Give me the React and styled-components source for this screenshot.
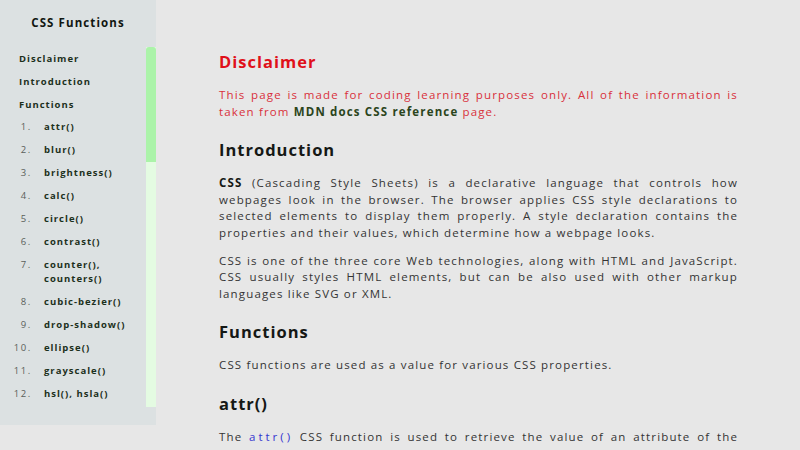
import styled, { createGlobalStyle } from "styled-components";

const GlobalStyle = createGlobalStyle`
  * { box-sizing: border-box; }
  html, body {
    margin: 0;
    height: 100%;
    overflow: hidden;
    background: #e7e7e7;
    font-family: 'Open Sans', 'Noto Sans', sans-serif;
  }
`

const functionsList = [
    "attr()",
    "blur()",
    "brightness()",
    "calc()",
    "circle()",
    "contrast()",
    "counter(), counters()",
    "cubic-bezier()",
    "drop-shadow()",
    "ellipse()",
    "grayscale()",
    "hsl(), hsla()",
    "hue-rotate()",
    "hwb()",
    "inset()",
    "invert()",
    "linear-gradient()",
    "matrix()",
    "max()",
    "min()",
    "opacity()",
    "perspective()",
    "polygon()",
    "radial-gradient()",
    "rgb(), rgba()",
    "rotate()",
    "saturate()",
    "scale()",
    "sepia()",
    "skew()",
    "translate()",
    "url()",
    "var()",
]

export default function App() {
    return (
        <>
            <GlobalStyle />
            <Page>
                <Sidebar>
                    <SideTitle>CSS Functions</SideTitle>
                    <NavBody>
                        <NavScroll>
                            <NavLink href="#disclaimer">Disclaimer</NavLink>
                            <NavLink href="#introduction">Introduction</NavLink>
                            <NavLink href="#functions">Functions</NavLink>
                            <NavList>
                                {functionsList.map((name, i) => (
                                    <NavItem key={i}><a href="#">{name}</a></NavItem>
                                ))}
                            </NavList>
                        </NavScroll>
                        <ScrollTrack>
                            <ScrollThumb />
                        </ScrollTrack>
                    </NavBody>
                </Sidebar>

                <Main>
                    <Section id="disclaimer">
                        <Heading warn>Disclaimer</Heading>
                        <Text warn>
                            This page is made for coding learning purposes only. All of the information is
                            taken from <Strong green>MDN docs CSS reference</Strong> page.
                        </Text>
                    </Section>

                    <Section id="introduction">
                        <Heading>Introduction</Heading>
                        <Text>
                            <Strong>CSS</Strong> (Cascading Style Sheets) is a declarative language that controls how
                            webpages look in the browser. The browser applies CSS style declarations to
                            selected elements to display them properly. A style declaration contains the
                            properties and their values, which determine how a webpage looks.
                        </Text>
                        <Text>
                            CSS is one of the three core Web technologies, along with HTML and JavaScript.
                            CSS usually styles HTML elements, but can be also used with other markup
                            languages like SVG or XML.
                        </Text>
                    </Section>

                    <Section id="functions">
                        <Heading>Functions</Heading>
                        <Text>CSS functions are used as a value for various CSS properties.</Text>
                    </Section>

                    <Section id="attr">
                        <Heading>attr()</Heading>
                        <Text>
                            The <Code>attr()</Code> CSS function is used to retrieve the value of an attribute of the
                            selected element and use it in the stylesheet.
                        </Text>
                    </Section>
                </Main>
            </Page>
        </>
    )
}

const Page = styled.div`
display: flex;
align-items: flex-start;
height: 100vh;
`
const Sidebar = styled.nav`
width: 156px;
flex-shrink: 0;
height: 425px;
background-color: #dce1e2;
display: flex;
flex-direction: column;
padding-bottom: 18px;
`
const SideTitle = styled.h1`
margin: 0;
padding: 15px 0 0 0;
height: 47px;
text-align: center;
font-size: 11.5px;
font-weight: 700;
letter-spacing: 1.1px;
color: #111611;
`
const NavBody = styled.div`
flex: 1;
min-height: 0;
display: flex;
`
const NavScroll = styled.div`
flex: 1;
overflow: hidden;
padding-left: 19px;
`
const ScrollTrack = styled.div`
width: 10px;
flex-shrink: 0;
background: #e4fbe2;
`
const ScrollThumb = styled.div`
height: 115px;
background: #abf3a9;
border-radius: 3px 3px 0 0;
`
const NavLink = styled.a`
display: block;
height: 23px;
padding-top: 5px;
font-size: 9.5px;
font-weight: 700;
letter-spacing: 1px;
color: #1c301c;
text-decoration: none;
`
const NavList = styled.ol`
margin: 0;
padding: 0 0 0 17px;
`
const NavItem = styled.li`
padding: 4px 0 5px 8px;
font-size: 9.5px;
line-height: 14px;
letter-spacing: 1px;
color: #5a5f5a;
&::marker { font-weight: 400; letter-spacing: 1.6px; }
a {
    font-weight: 700;
    color: #1c301c;
    text-decoration: none;
}
`
const Main = styled.main`
flex: 1;
padding: 38px 62px 0 63px;
`
const Section = styled.section`
margin-bottom: 18px;
`
const Heading = styled.h2`
margin: 12px 0 14px 0;
font-size: 16.5px;
font-weight: 700;
letter-spacing: 1px;
color: ${props => props.warn ? "#e01019" : "#151815"};
`
const Text = styled.p`
margin: 0 0 11px 0;
font-size: 11.5px;
line-height: 16.6px;
letter-spacing: 1.15px;
text-align: justify;
color: ${props => props.warn ? "#d9303b" : "#343434"};
`
const Strong = styled.strong`
font-weight: 700;
color: ${props => props.green ? "#2b451c" : "#151815"};
`
const Code = styled.code`
font-family: 'Open Sans', sans-serif;
letter-spacing: 3px;
color: #3535d0;
`
